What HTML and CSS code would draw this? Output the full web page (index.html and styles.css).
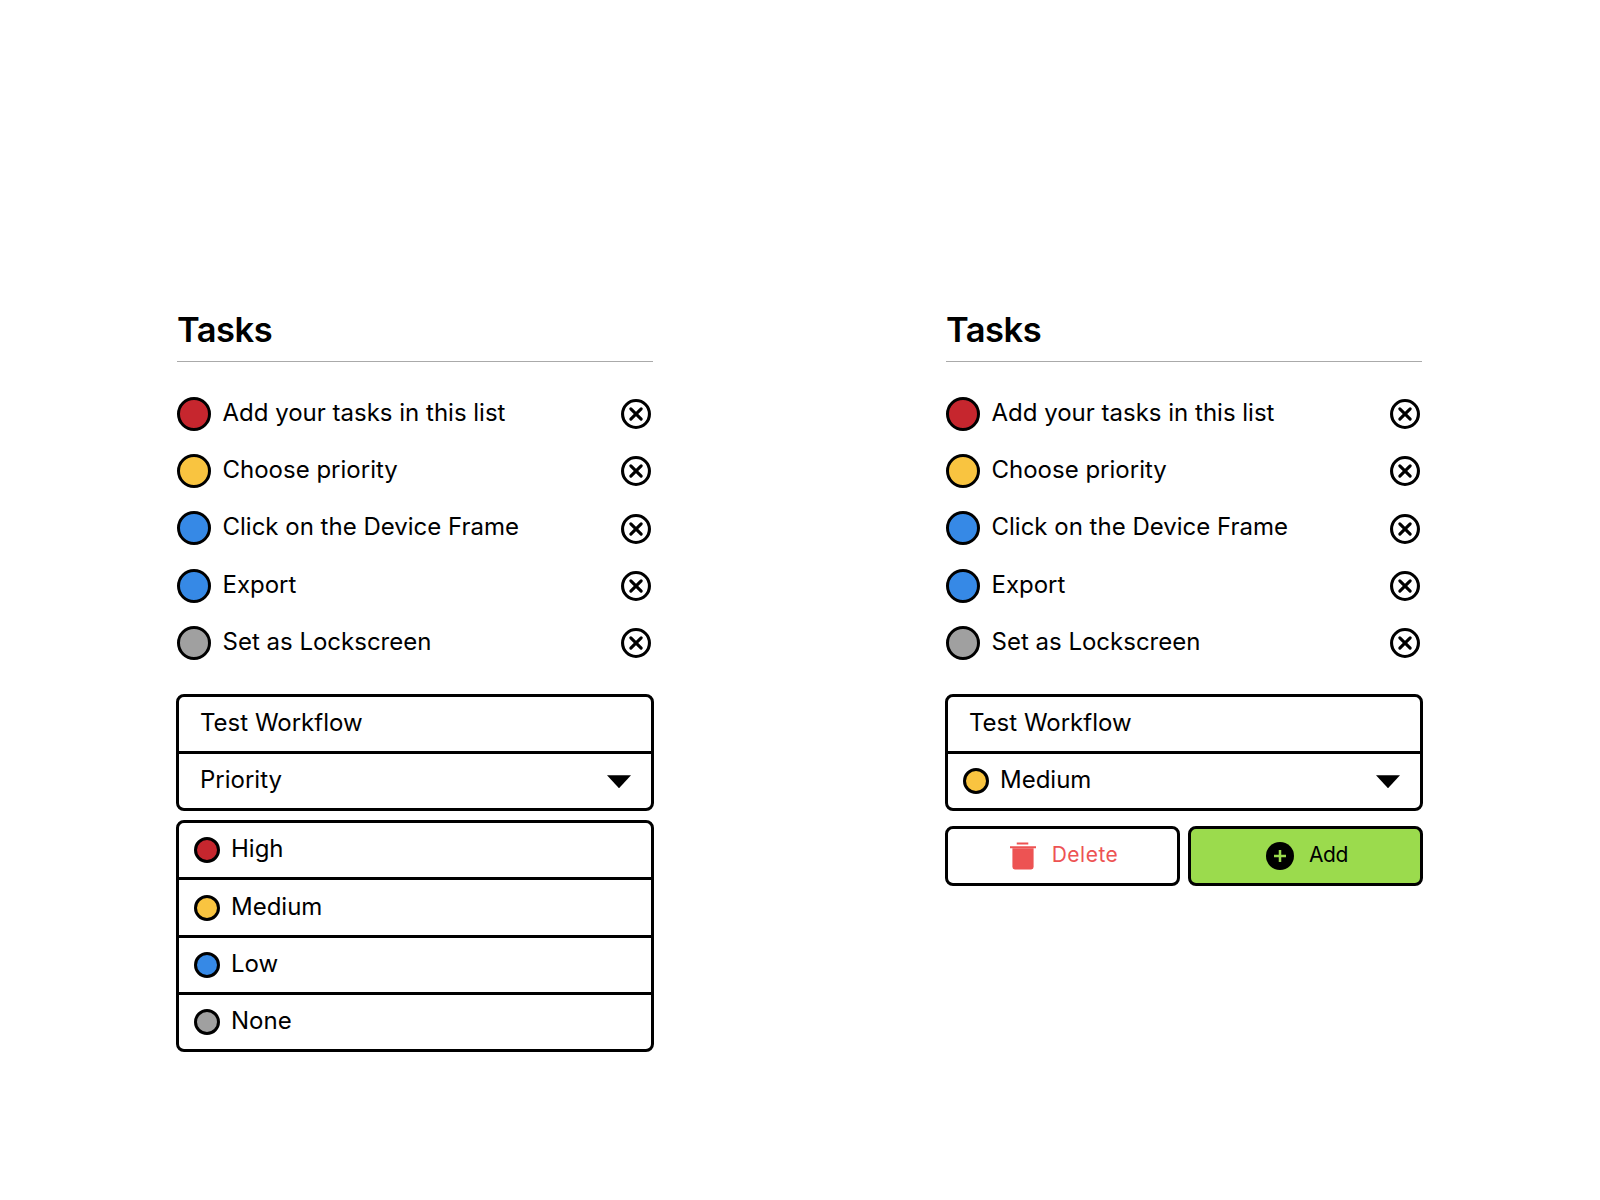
FILE: index.html
```html
<!DOCTYPE html>
<html lang="en">
<head>
<meta charset="utf-8">
<title>Tasks</title>
<link rel="stylesheet" href="styles.css">
</head>
<body>
<main class="page">
  <section class="panel">
    <h1 class="title">Tasks</h1>
    <ul class="tasks">
      <li class="task"><span class="dot dot-lg high"></span><span class="task-text">Add your tasks in this list</span><svg class="remove" viewBox="0 0 29 29"><circle cx="14.5" cy="14.5" r="13"/><path d="M9.500 9.500l10 10M19.500 9.500l-10 10"/></svg></li>
      <li class="task"><span class="dot dot-lg medium"></span><span class="task-text">Choose priority</span><svg class="remove" viewBox="0 0 29 29"><circle cx="14.5" cy="14.5" r="13"/><path d="M9.500 9.500l10 10M19.500 9.500l-10 10"/></svg></li>
      <li class="task"><span class="dot dot-lg low"></span><span class="task-text">Click on the Device Frame</span><svg class="remove" viewBox="0 0 29 29"><circle cx="14.5" cy="14.5" r="13"/><path d="M9.500 9.500l10 10M19.500 9.500l-10 10"/></svg></li>
      <li class="task"><span class="dot dot-lg low"></span><span class="task-text">Export</span><svg class="remove" viewBox="0 0 29 29"><circle cx="14.5" cy="14.5" r="13"/><path d="M9.500 9.500l10 10M19.500 9.500l-10 10"/></svg></li>
      <li class="task"><span class="dot dot-lg none"></span><span class="task-text">Set as Lockscreen</span><svg class="remove" viewBox="0 0 29 29"><circle cx="14.5" cy="14.5" r="13"/><path d="M9.500 9.500l10 10M19.500 9.500l-10 10"/></svg></li>
    </ul>
    <div class="box form">
      <div class="row row-input">Test Workflow</div>
      <div class="row row-select row-input"><span>Priority</span><span class="caret"></span></div>
    </div>
    <div class="box options">
      <div class="row row-option"><span class="dot high"></span>High</div>
      <div class="row row-option"><span class="dot medium"></span>Medium</div>
      <div class="row row-option"><span class="dot low"></span>Low</div>
      <div class="row row-option"><span class="dot none"></span>None</div>
    </div>
  </section>
  <section class="panel">
    <h1 class="title">Tasks</h1>
    <ul class="tasks">
      <li class="task"><span class="dot dot-lg high"></span><span class="task-text">Add your tasks in this list</span><svg class="remove" viewBox="0 0 29 29"><circle cx="14.5" cy="14.5" r="13"/><path d="M9.500 9.500l10 10M19.500 9.500l-10 10"/></svg></li>
      <li class="task"><span class="dot dot-lg medium"></span><span class="task-text">Choose priority</span><svg class="remove" viewBox="0 0 29 29"><circle cx="14.5" cy="14.5" r="13"/><path d="M9.500 9.500l10 10M19.500 9.500l-10 10"/></svg></li>
      <li class="task"><span class="dot dot-lg low"></span><span class="task-text">Click on the Device Frame</span><svg class="remove" viewBox="0 0 29 29"><circle cx="14.5" cy="14.5" r="13"/><path d="M9.500 9.500l10 10M19.500 9.500l-10 10"/></svg></li>
      <li class="task"><span class="dot dot-lg low"></span><span class="task-text">Export</span><svg class="remove" viewBox="0 0 29 29"><circle cx="14.5" cy="14.5" r="13"/><path d="M9.500 9.500l10 10M19.500 9.500l-10 10"/></svg></li>
      <li class="task"><span class="dot dot-lg none"></span><span class="task-text">Set as Lockscreen</span><svg class="remove" viewBox="0 0 29 29"><circle cx="14.5" cy="14.5" r="13"/><path d="M9.500 9.500l10 10M19.500 9.500l-10 10"/></svg></li>
    </ul>
    <div class="box form">
      <div class="row row-input">Test Workflow</div>
      <div class="row row-select row-option"><span class="dot medium"></span><span class="grow">Medium</span><span class="caret"></span></div>
    </div>
    <div class="actions">
      <button class="btn btn-delete"><svg class="trash" viewBox="0 0 27 28"><path class="trash-lid" d="M7 1h12M0 5h27"/><path class="trash-can" d="M2.500 6h22v19.500a2.500 2.500 0 0 1-2.500 2.500h-17a2.500 2.500 0 0 1-2.500-2.500z"/></svg><span class="btn-label">Delete</span></button>
      <button class="btn btn-add"><svg class="plus" viewBox="0 0 28 28"><circle cx="14" cy="14" r="14"/><path d="M14 8v12M8 14h12"/></svg><span class="btn-label">Add</span></button>
    </div>
  </section>
</main>
</body>
</html>
```
FILE: styles.css
```css
* { box-sizing: border-box; }
html, body { margin: 0; background: #fff; }
body { font-family: Inter, "Liberation Sans", sans-serif; color: #000; }
.page { display: flex; gap: 291px; padding: 304px 0 0 176px; }
.panel { width: 478px; flex: none; }
.title {
  margin: 0 1px;
  height: 58px;
  padding-top: 4px;
  border-bottom: 1.5px solid #aaa;
  font-size: 34.500px;
  line-height: 44px;
  font-weight: 600;
  letter-spacing: -0.5px;
}
.tasks { list-style: none; margin: 0; padding: 23px 1px 0; }
.task { display: flex; align-items: center; height: 57.33px; }
.dot { display: block; flex: none; width: 26px; height: 26px; border: 3px solid #000; border-radius: 50%; }
.dot-lg { width: 34px; height: 34px; }
.high { background: #c6262e; }
.medium { background: #f9c440; }
.low { background: #3689e6; }
.none { background: #a0a0a0; }
.task-text { flex: 1; margin: -3px 0 0 11.500px; font-size: 24px; }
.remove { flex: none; width: 30px; height: 30px; margin: 1px 2px 0 0; fill: none; stroke: #000; stroke-width: 3; stroke-linecap: round; }
.box { display: flex; flex-direction: column; border: 3px solid #000; border-radius: 8px; background: #fff; }
.form { margin-top: 22px; }
.options { margin-top: 9.500px; }
.row { flex: none; height: 54px; display: flex; align-items: center; font-size: 24px; padding-bottom: 3px; }
.row + .row { height: 57.33px; border-top: 3px solid #000; }
.row-input { padding-left: 21px; }
.row-select { padding-right: 20px; }
.row-option { padding-left: 15px; }
.row-option .dot { margin: 3px 11px 0 0; }
.row-select span:first-child:not(.dot), .grow { flex: 1; }
.caret { width: 24px; height: 13px; margin-top: 5px; background: #000; clip-path: polygon(0 0, 100% 0, 50% 100%); }
.actions { display: grid; grid-template-columns: 1fr 1fr; gap: 8px; margin-top: 15px; }
.btn {
  display: flex; align-items: center; justify-content: center;
  height: 60px; border: 3px solid #000; border-radius: 8px; padding: 0 0 0 3px;
  font: inherit; font-size: 21px; cursor: pointer;
}
.btn-label { margin-bottom: 3px; }
.btn-delete { background: #fff; color: #ed5353; gap: 16px; letter-spacing: 0.5px; }
.btn-add { background: #9bdb4d; color: #000; gap: 15px; padding-left: 3px; letter-spacing: -0.4px; }
.trash { width: 26px; height: 28px; }
.trash-lid { fill: none; stroke: #ed5353; stroke-width: 2; }
.trash-can { fill: #ed5353; }
.plus { width: 28px; height: 28px; }
.plus circle { fill: #000; }
.plus path { fill: none; stroke: #9bdb4d; stroke-width: 2.500; }
```
